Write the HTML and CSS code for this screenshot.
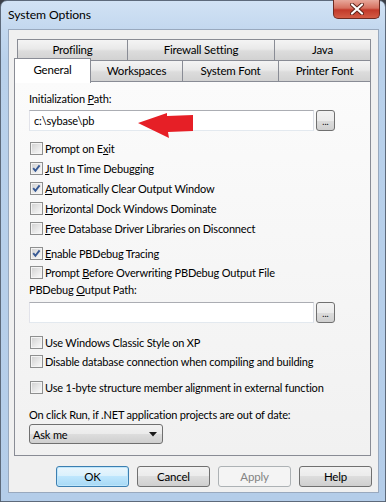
FILE: index.html
```html
<!DOCTYPE html>
<html>
    <head>
        <title>System Options</title>
        <link rel="stylesheet" href="styles.css">
    </head>
    <body>
        <div class="window">
            <div class="titlebar">
                <span class="title">System Options</span>
                <span class="close">
                    <svg width="14" height="12" viewBox="0 0 14 12">
                        <path d="M2 1.5 L12 10.5 M12 1.5 L2 10.5" stroke="#5a2118" stroke-width="4" stroke-linecap="round"/>
                        <path d="M2 1.5 L12 10.5 M12 1.5 L2 10.5" stroke="#fff" stroke-width="2.2" stroke-linecap="round"/>
                    </svg>
                </span>
            </div>
            <div class="client">
                <!-- tab headers -->
                <div class="tabs">
                    <div class="tabrow back">
                        <div class="tab tab-profiling">Profiling</div>
                        <div class="tab tab-firewall">Firewall Setting</div>
                        <div class="tab tab-java">Java</div>
                    </div>
                    <div class="tabrow front">
                        <div class="tab tab-general active">General</div>
                        <div class="tab tab-workspaces">Workspaces</div>
                        <div class="tab tab-sysfont">System Font</div>
                        <div class="tab tab-printfont">Printer Font</div>
                    </div>
                </div>
                <!-- general page -->
                <div class="panel">
                    <div class="label">Initialization <u>P</u>ath:</div>
                    <div class="pathrow">
                        <div class="field">c:\sybase\pb</div>
                        <div class="browse">...</div>
                    </div>
                    <div class="group group1">
                        <div class="check"><span class="box"></span><span>Prompt on E<u>x</u>it</span></div>
                        <div class="check"><span class="box on"></span><span><u>J</u>ust In Time Debugging</span></div>
                        <div class="check"><span class="box on"></span><span><u>A</u>utomatically Clear Output Window</span></div>
                        <div class="check"><span class="box"></span><span><u>H</u>orizontal Dock Windows Dominate</span></div>
                        <div class="check"><span class="box"></span><span><u>F</u>ree Database Driver Libraries on Disconnect</span></div>
                    </div>
                    <div class="group group2">
                        <div class="check"><span class="box on"></span><span><u>E</u>nable PBDebug Tracing</span></div>
                        <div class="check"><span class="box"></span><span>Prompt <u>B</u>efore Overwriting PBDebug Output File</span></div>
                    </div>
                    <div class="label">PBDebug <u>O</u>utput Path:</div>
                    <div class="pathrow second">
                        <div class="field"></div>
                        <div class="browse">...</div>
                    </div>
                    <div class="group group3">
                        <div class="check"><span class="box"></span><span>Use Windows Classic Style on XP</span></div>
                        <div class="check"><span class="box"></span><span>Disable database connection when compiling and building</span></div>
                    </div>
                    <div class="group group4">
                        <div class="check"><span class="box"></span><span>Use 1-byte structure member alignment in external function</span></div>
                    </div>
                    <div class="label runlabel">On click Run, if .NET application projects are out of date:</div>
                    <div class="combo">
                        <span>Ask me</span>
                        <svg width="8" height="5" viewBox="0 0 8 5"><path d="M0 0 H8 L4 4.5 Z" fill="#1a1a1a"/></svg>
                    </div>
                </div>
                <div class="buttons">
                    <button class="btn default">OK</button>
                    <button class="btn">Cancel</button>
                    <button class="btn disabled">Apply</button>
                    <button class="btn">Help</button>
                </div>
            </div>
            <svg class="arrow" width="58" height="28" viewBox="0 0 58 28">
                <polygon points="1,11 30,1 30,4 56,3 56,19 31,20 32,26" fill="#e61f26"/>
            </svg>
        </div>
    </body>
</html>
```

FILE: styles.css
```css
html,body {
    margin:0;
}
body {
    background: #3c4048;
    width: 386px;
    height: 502px;
    overflow: hidden;
    font-family: Lato, "Open Sans", sans-serif;
    font-size: 11px;
    letter-spacing: -0.18px;
    color: #000;
}
/* window frame */
.window {
    position: relative;
    width: 386px;
    height: 502px;
    box-sizing: border-box;
    border: 1px solid #5d6a7b;
    border-radius: 7px 7px 0 0;
    background: linear-gradient(to bottom, #d1e2f4 0, #c3d8ef 28px, #b9d1eb 60px, #b4cde9 100%);
}
.titlebar {
    height: 28px;
    display: flex;
    justify-content: space-between;
    align-items: flex-start;
}
.title {
    margin: 6px 0 0 7px;
    line-height: 16px;
    font-size: 12.2px;
    letter-spacing: -0.1px;
}
.close {
    width: 47px;
    height: 19px;
    margin: -1px 5px 0 0;
    box-sizing: border-box;
    border: 1px solid #6e2a21;
    border-top: none;
    border-radius: 0 0 5px 5px;
    background: linear-gradient(to bottom, #e8a89b 0, #d6705f 45%, #c2392a 55%, #d35c46 100%);
    display: flex;
    align-items: center;
    justify-content: center;
}
.client {
    margin-left: 7px;
    width: 371px;
    height: 464px;
    box-sizing: border-box;
    border: 1px solid #99a9be;
    background: #f0f0f0;
}
/* tabs */
.tabs {
    margin: 9px 0 0 5px;
    width: 357px;
}
.tabrow {
    display: flex;
}
.tabrow.back {
    padding-left: 3px;
}
.tabrow.front {
    height: 22px;
    margin-top: -1px;
    align-items: flex-end;
}
.tab {
    height: 22px;
    box-sizing: border-box;
    border: 1px solid #898c95;
    background: linear-gradient(to bottom, #f4f4f4 0, #e9e9e9 45%, #dcdcdc 55%, #d2d2d2 100%);
    display: flex;
    align-items: center;
    justify-content: center;
    padding-bottom: 1px;
    font-size: 11.5px;
    letter-spacing: -0.2px;
}
.tab + .tab {
    margin-left: -1px;
}
.tab-profiling { width: 111px; }
.tab-firewall { width: 148px; }
.tab-java { width: 97px; }
.tab-general { width: 77px; }
.tab-workspaces { width: 93px; }
.tab-sysfont { width: 97px; }
.tab-printfont { width: 93px; }
.tab.active {
    height: 25px;
    margin-bottom: -1px;
    border-bottom: none;
    background: #fff;
    position: relative;
    z-index: 1;
    padding-bottom: 4px;
}
.panel {
    margin: -1px 0 0 5px;
    width: 357px;
    height: 375px;
    box-sizing: border-box;
    border: 1px solid #898c95;
    background: linear-gradient(to bottom, #fbfbfb, #f1f1f1);
    padding: 9px 0 0 14px;
}
.label {
    line-height: 16px;
}
.runlabel {
    margin-top: 10px;
}
.pathrow {
    display: flex;
    align-items: center;
    gap: 2px;
    margin-top: 3px;
}
.pathrow.second {
    margin-top: 4px;
}
.field {
    width: 285px;
    height: 21px;
    box-sizing: border-box;
    border: 1px solid #abadb3;
    border-color: #abadb3 #dbdfe6 #e3e9ef #e2e3ea;
    background: #fff;
    padding-left: 4px;
    line-height: 19px;
}
.browse {
    width: 19px;
    height: 21px;
    box-sizing: border-box;
    border: 1px solid #707070;
    border-radius: 3px;
    background: linear-gradient(to bottom, #f2f2f2 0, #ebebeb 50%, #dddddd 50%, #cfcfcf 100%);
    font-size: 9px;
    line-height: 22px;
    letter-spacing: 0;
    text-align: center;
}
/* checkbox rows */
.group {
    margin-top: 7px;
}
.group2 { margin-top: 6px; }
.group3 { margin-top: 10px; }
.group2 .check,
.group3 .check,
.group4 .check {
    height: 19px;
}
.check {
    display: flex;
    align-items: center;
    height: 20px;
    margin-left: 1px;
}
.box {
    width: 13px;
    height: 13px;
    box-sizing: border-box;
    border: 1px solid #8e8f8f;
    box-shadow: inset 0 0 0 1px #f4f4f4;
    background: linear-gradient(135deg, #cfcfcf 0, #e6e6e6 50%, #fbfbfb 100%);
    margin-right: 2px;
    flex: none;
}
.box.on {
    background: url("data:image/svg+xml,%3Csvg xmlns='http://www.w3.org/2000/svg' width='11' height='11'%3E%3Cpath d='M2.2 5.2 L4.4 7.8 L8.6 2.3' fill='none' stroke='%23385a94' stroke-width='1.9'/%3E%3C/svg%3E") center no-repeat, linear-gradient(135deg, #cfcfcf 0, #e6e6e6 50%, #fbfbfb 100%);
}
.combo {
    margin-top: 1px;
    width: 134px;
    height: 20px;
    box-sizing: border-box;
    border: 1px solid #707070;
    border-radius: 3px;
    background: linear-gradient(to bottom, #f2f2f2 0, #ebebeb 50%, #dddddd 50%, #cfcfcf 100%);
    display: flex;
    align-items: center;
    justify-content: space-between;
    padding: 0 5px 0 3px;
}
/* dialog buttons */
.buttons {
    display: flex;
    justify-content: flex-end;
    gap: 8px;
    margin-top: 10px;
    padding-right: 6px;
}
.btn {
    width: 73px;
    height: 21px;
    box-sizing: border-box;
    border: 1px solid #707070;
    border-radius: 3px;
    background: linear-gradient(to bottom, #f2f2f2 0, #ebebeb 50%, #dddddd 50%, #cfcfcf 100%);
    font-family: inherit;
    font-size: 11.5px;
    letter-spacing: -0.2px;
    color: #000;
    padding: 0;
}
.btn.default {
    border-color: #3c7fb1;
    box-shadow: inset 0 0 0 1px #bfe6fb;
    background: linear-gradient(to bottom, #eaf6fd 0, #d9f0fc 50%, #bee6fd 50%, #a7d9f5 100%);
}
.btn.disabled {
    border-color: #adb2b5;
    background: #f4f4f4;
    color: #838383;
}
.arrow {
    position: absolute;
    left: 136px;
    top: 111px;
}
```
